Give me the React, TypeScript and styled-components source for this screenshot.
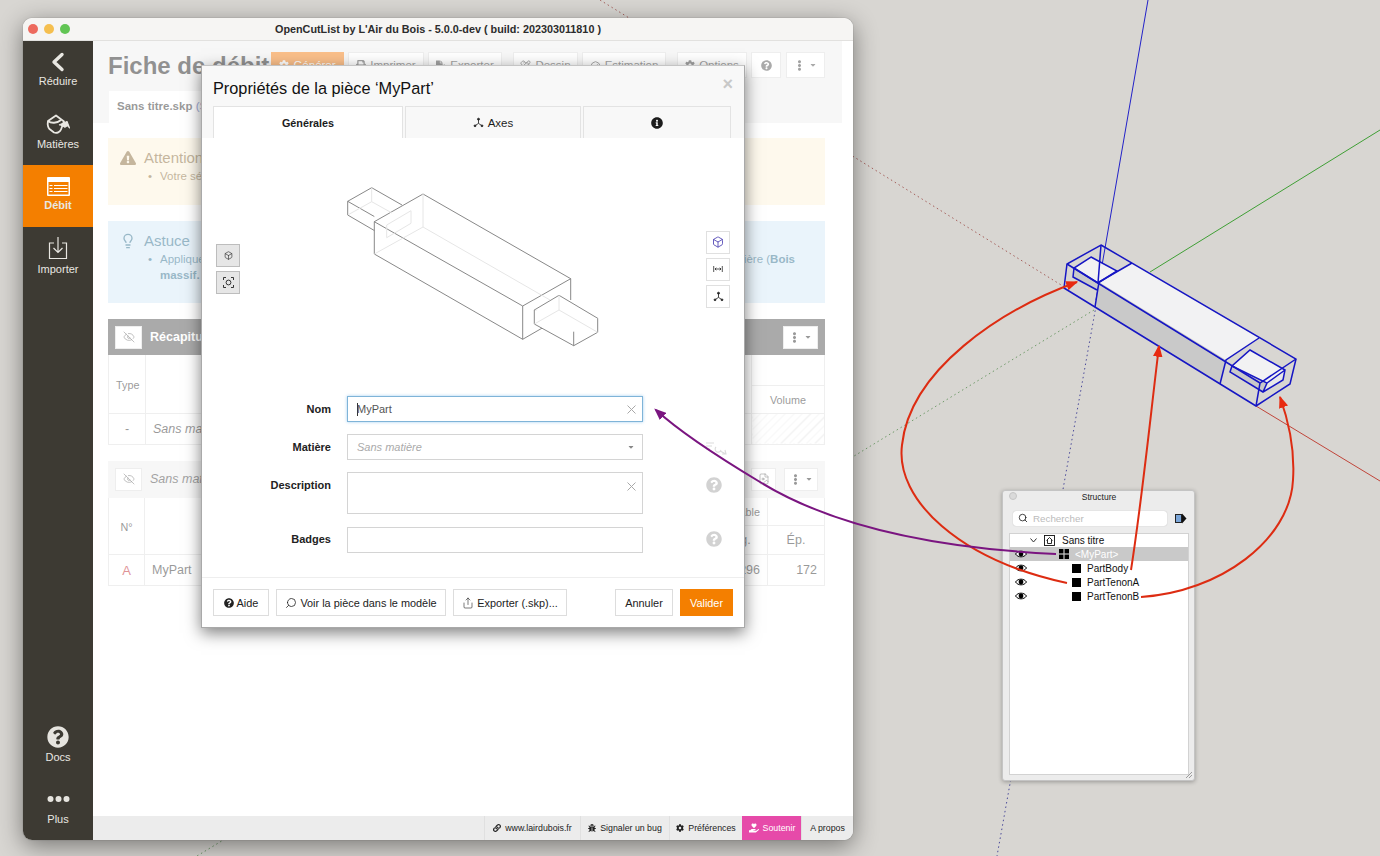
import React from "react";
import styled, { createGlobalStyle } from "styled-components";
import {
  FaQuestionCircle,
  FaInfoCircle,
  FaExclamationTriangle,
  FaCog,
  FaBug,
  FaLink,
  FaHandHoldingHeart,
  FaPrint,
  FaFileExport,
  FaEllipsisV,
  FaCaretDown,
} from "react-icons/fa";
import { Lightbulb, Search, Share, EyeOff, Box, FileImage, Gauge, PencilRuler } from "lucide-react";

const GlobalStyle = createGlobalStyle`
  html, body { margin: 0; padding: 0; background: #d8d6d2; }
  body { font-family: "Liberation Sans", Arial, sans-serif; }
  * { box-sizing: border-box; }
`;

const Desktop = styled.div`
  position: relative;
  width: 1380px;
  height: 856px;
  overflow: hidden;
  background: #d8d6d2;
`;

const SceneLayer = styled.svg`
  position: absolute;
  left: 0;
  top: 0;
  width: 1380px;
  height: 856px;
`;

const ArrowLayer = styled(SceneLayer)`
  pointer-events: none;
`;

const Window = styled.div`
  position: absolute;
  left: 23px;
  top: 18px;
  width: 830px;
  height: 822px;
  display: flex;
  flex-direction: column;
  border-radius: 9px;
  overflow: hidden;
  background: #fff;
  box-shadow: 0 0 1px rgba(0, 0, 0, 0.5), 0 6px 24px rgba(0, 0, 0, 0.45);
`;

const TitleBar = styled.div`
  position: relative;
  flex: 0 0 23px;
  display: flex;
  align-items: center;
  justify-content: center;
  background: #f6f5f3;
  border-bottom: 1px solid #e2e1df;
  font-size: 10.8px;
  font-weight: 700;
  color: #2c2c2c;
`;

const Lights = styled.div`
  position: absolute;
  left: 5px;
  top: 6px;
  display: flex;
  gap: 6px;
`;

const Light = styled.span<{ $c: string }>`
  width: 10px;
  height: 10px;
  border-radius: 50%;
  background: ${(p) => p.$c};
`;

const WindowBody = styled.div`
  flex: 1;
  display: flex;
  min-height: 0;
`;

const Sidebar = styled.nav`
  flex: 0 0 70px;
  display: flex;
  flex-direction: column;
  background: #3d3a33;
`;

const NavItem = styled.div<{ $active?: boolean }>`
  flex: 0 0 62px;
  display: flex;
  flex-direction: column;
  align-items: center;
  justify-content: center;
  gap: 3px;
  padding-bottom: 4px;
  color: #e9e7e2;
  background: ${(p) => (p.$active ? "#f47f00" : "transparent")};
  font-size: 11px;
  font-weight: ${(p) => (p.$active ? 700 : 400)};
  line-height: 13px;
`;

const NavSpacer = styled.div`
  flex: 1;
`;

const Main = styled.div`
  flex: 1;
  display: flex;
  flex-direction: column;
  min-width: 0;
`;

const Page = styled.div`
  position: relative;
  flex: 1;
  overflow: hidden;
  background: #fff;
`;

const PageHeader = styled.header`
  width: 749px;
  height: 82px;
  background: #efefef;
  padding: 11px 0 0 15px;
`;

const HeaderRow = styled.div`
  display: flex;
  align-items: center;
  height: 26px;
`;

const PageTitle = styled.h1`
  margin: 2px 0 0;
  width: 163px;
  font-size: 24px;
  font-weight: 700;
  color: #222;
  white-space: nowrap;
`;

const Toolbar = styled.div`
  display: flex;
  gap: 4px;
`;

const ToolButton = styled.div<{ $w: number; $primary?: boolean; $mr?: number }>`
  width: ${(p) => p.$w}px;
  height: 26px;
  margin-right: ${(p) => p.$mr ?? 0}px;
  display: flex;
  align-items: center;
  justify-content: center;
  gap: 4px;
  font-size: 11.5px;
  color: ${(p) => (p.$primary ? "#fff" : "#444")};
  background: ${(p) => (p.$primary ? "#f47f14" : "#fff")};
  border: 1px solid ${(p) => (p.$primary ? "#f47f14" : "#ddd")};
`;

const FileTabs = styled.div`
  display: flex;
  margin-top: 13px;
`;

const FileTab = styled.div`
  width: 260px;
  height: 32px;
  margin-left: 1px;
  padding: 0 8px 2px;
  display: flex;
  align-items: center;
  background: #fff;
  font-size: 11.5px;
  font-weight: 700;
  color: #333;
  white-space: nowrap;
`;

const FileTabLink = styled.span`
  font-weight: 400;
  color: #3a4fae;
`;

const PageContent = styled.div`
  width: 749px;
  padding: 15px 17px 0 15px;
`;

const Alert = styled.section<{ $kind: "warn" | "info"; $h: number }>`
  height: ${(p) => p.$h}px;
  margin-bottom: 16px;
  padding: 10px 12px;
  background: ${(p) => (p.$kind === "warn" ? "#fcf3db" : "#d4e8f6")};
  color: ${(p) => (p.$kind === "warn" ? "#8a6d3b" : "#31708f")};
`;

const AlertTitle = styled.div`
  display: flex;
  align-items: center;
  gap: 8px;
  font-size: 15px;
  line-height: 20px;
`;

const AlertLine = styled.div<{ $bullet?: boolean }>`
  position: relative;
  display: flex;
  justify-content: space-between;
  padding: 1px 18px 0 40px;
  font-size: 11.5px;
  line-height: 15px;
  &::before {
    content: ${(p) => (p.$bullet ? '"•"' : '""')};
    position: absolute;
    left: 28px;
  }
`;

const Strong = styled.b``;

const Panel = styled.section`
  margin-bottom: 16px;
`;

const PanelHead = styled.div<{ $dark?: boolean }>`
  height: ${(p) => (p.$dark ? 36 : 37)}px;
  display: flex;
  align-items: center;
  gap: 8px;
  padding: 0 7px;
  background: ${(p) => (p.$dark ? "#555" : "#eee")};
  color: ${(p) => (p.$dark ? "#fff" : "#444")};
  font-size: 12.5px;
  font-weight: ${(p) => (p.$dark ? 700 : 400)};
  font-style: ${(p) => (p.$dark ? "normal" : "italic")};
`;

const PanelSpacer = styled.div`
  flex: 1;
`;

const HeadButton = styled.div<{ $w: number }>`
  width: ${(p) => p.$w}px;
  height: 23px;
  display: flex;
  align-items: center;
  justify-content: center;
  gap: 4px;
  background: #fff;
  color: #333;
  border: 1px solid #ddd;
`;

const Grid = styled.table`
  width: 100%;
  table-layout: fixed;
  border-collapse: collapse;
  font-size: 12.5px;
  color: #333;
`;

const Col = styled.col<{ $w?: number }>`
  width: ${(p) => (p.$w ? `${p.$w}px` : "auto")};
`;

const Cell = styled.td<{
  $h?: number;
  $align?: string;
  $italic?: boolean;
  $hatch?: boolean;
  $red?: boolean;
  $open?: boolean;
  $small?: boolean;
}>`
  height: ${(p) => p.$h ?? 28}px;
  padding: ${(p) => (p.$small ? "2px 7px 0" : "0 7px")};
  font-size: ${(p) => (p.$red ? 13 : p.$small ? 10.8 : 12.5)}px;
  border: 1px solid #dedede;
  border-top: ${(p) => (p.$open ? "none" : "1px solid #dedede")};
  text-align: ${(p) => p.$align ?? "center"};
  font-style: ${(p) => (p.$italic ? "italic" : "normal")};
  color: ${(p) => (p.$red ? "#c0262d" : "#333")};
  white-space: nowrap;
  overflow: hidden;
  background: ${(p) =>
    p.$hatch
      ? "repeating-linear-gradient(135deg, #fff, #fff 5px, #e4e4e4 5px, #e4e4e4 6px)"
      : "transparent"};
`;

const Backdrop = styled.div`
  position: absolute;
  inset: 0;
  background: rgba(255, 255, 255, 0.5);
`;

const Modal = styled.div`
  position: absolute;
  left: 108px;
  top: 24px;
  width: 544px;
  height: 563px;
  display: flex;
  flex-direction: column;
  background: #fff;
  border: 1px solid #a9a9a9;
  border-top-color: #c4c4c4;
  box-shadow: 0 5px 15px rgba(0, 0, 0, 0.5);
`;

const ModalHead = styled.div`
  flex: 0 0 72px;
  display: flex;
  flex-direction: column;
  background: #f8f8f8;
`;

const ModalTitleRow = styled.div`
  flex: 0 0 40px;
  display: flex;
  align-items: center;
  justify-content: space-between;
  padding: 4px 11px 0 11px;
`;

const ModalTitle = styled.h2`
  margin: 0;
  font-size: 16.3px;
  font-weight: 400;
  color: #111;
`;

const CloseGlyph = styled.span`
  margin-top: -8px;
  font-size: 18px;
  font-weight: 700;
  color: #c8c8c8;
  line-height: 1;
`;

const ModalTabs = styled.div`
  flex: 1;
  display: grid;
  grid-template-columns: 190px 176px 148px;
  gap: 2px;
  padding: 0 13px 0 11px;
`;

const ModalTab = styled.div<{ $active?: boolean }>`
  display: flex;
  align-items: center;
  justify-content: center;
  gap: 4px;
  font-size: ${(p) => (p.$active ? 10.8 : 11.5)}px;
  font-weight: ${(p) => (p.$active ? 700 : 400)};
  color: #1c1c1c;
  background: ${(p) => (p.$active ? "#fff" : "transparent")};
  border: 1px solid #e3e3e3;
  border-bottom: none;
`;

const ModalBody = styled.div`
  flex: 1;
  display: flex;
  flex-direction: column;
`;

const Preview = styled.div`
  flex: 0 0 258px;
  display: flex;
  align-items: center;
  padding: 4px 14px 0 14px;
`;

const ViewButtons = styled.div`
  display: flex;
  flex-direction: column;
  gap: 4px;
`;

const ViewButton = styled.div<{ $on?: boolean }>`
  width: 24px;
  height: 23px;
  display: flex;
  align-items: center;
  justify-content: center;
  background: ${(p) => (p.$on ? "#e6e6e6" : "#fff")};
  border: 1px solid ${(p) => (p.$on ? "#bdbdbd" : "#e0e0e0")};
  color: #222;
`;

const ModelDrawing = styled.svg`
  flex: 1;
  height: 254px;
`;

const Form = styled.div`
  display: grid;
  grid-template-columns: 118px 296px 1fr;
  column-gap: 16px;
  row-gap: 12px;
  padding-left: 11px;
`;

const Label = styled.label`
  text-align: right;
  font-size: 11px;
  font-weight: 700;
  line-height: 26px;
  color: #222;
`;

const Field = styled.div<{ $focus?: boolean; $tall?: boolean; $gap?: boolean }>`
  position: relative;
  height: ${(p) => (p.$tall ? 42 : 26)}px;
  display: flex;
  align-items: ${(p) => (p.$tall ? "flex-start" : "center")};
  padding: 0 9px;
  font-size: 11px;
  color: #555;
  background: #fff;
  border: 1.5px solid ${(p) => (p.$focus ? "#7fb4d8" : "#d4d4d4")};
  box-shadow: ${(p) => (p.$focus ? "0 0 3px rgba(102,175,233,.6)" : "none")};
  margin-top: ${(p) => (p.$gap ? 1 : 0)}px;
`;

const Caret = styled.span`
  width: 1px;
  height: 13px;
  margin-right: -1px;
  background: #333;
`;

const Placeholder = styled.span`
  font-style: italic;
  color: #aaa;
`;

const ClearMark = styled.svg<{ $top?: number }>`
  position: absolute;
  right: 6px;
  top: ${(p) => p.$top ?? 8}px;
  width: 9px;
  height: 9px;
  stroke: #a8a8a8;
  stroke-width: 1;
`;

const SelectCaret = styled(FaCaretDown)`
  position: absolute;
  right: 7px;
  top: 8px;
  width: 8px;
  height: 8px;
  color: #888;
`;

const SideSlot = styled.div<{ $gap?: boolean }>`
  display: flex;
  align-items: ${(p) => (p.$gap ? "center" : "flex-start")};
  padding: ${(p) => (p.$gap ? 1 : 5)}px 0 0 47px;
  color: #d2d2d2;
`;

const ModalFoot = styled.div`
  flex: 0 0 50px;
  display: flex;
  align-items: center;
  gap: 7px;
  padding: 0 11px;
  border-top: 1px solid #eee;
`;

const FootButton = styled.button<{ $w: number; $primary?: boolean }>`
  width: ${(p) => p.$w}px;
  height: 27px;
  padding: 0;
  display: flex;
  align-items: center;
  justify-content: center;
  gap: 3px;
  font-family: inherit;
  font-size: 10.9px;
  color: ${(p) => (p.$primary ? "#fff" : "#222")};
  background: ${(p) => (p.$primary ? "#f47f00" : "#fff")};
  border: 1px solid ${(p) => (p.$primary ? "#f47f00" : "#ddd")};
`;

const FootSpacer = styled.div`
  flex: 1;
`;

const FlippedSearch = styled(Search)`
  transform: scaleX(-1);
`;

const StatusBar = styled.footer`
  flex: 0 0 24px;
  display: flex;
  justify-content: flex-end;
  background: #ececec;
  font-size: 8.8px;
  color: #222;
`;

const StatusItem = styled.div<{ $w: number; $pink?: boolean }>`
  width: ${(p) => p.$w}px;
  display: flex;
  align-items: center;
  justify-content: center;
  gap: 4px;
  background: ${(p) => (p.$pink ? "#e64aa9" : "transparent")};
  color: ${(p) => (p.$pink ? "#fff" : "#222")};
  border-left: 1px solid ${(p) => (p.$pink ? "#e64aa9" : "#e0e0e0")};
`;

const StructurePanel = styled.aside`
  position: absolute;
  left: 1002px;
  top: 490px;
  width: 193px;
  height: 291px;
  display: flex;
  flex-direction: column;
  padding: 0 5px 5px 6px;
  background: #ececec;
  border: 1px solid #c4c4c4;
  border-radius: 3px;
  box-shadow: 0 1px 4px rgba(0, 0, 0, 0.3);
`;

const StructureTitle = styled.div`
  position: relative;
  flex: 0 0 12px;
  display: flex;
  align-items: center;
  justify-content: center;
  font-size: 8.5px;
  font-weight: 400;
  color: #222;
`;

const CloseDot = styled.span`
  position: absolute;
  left: 0;
  top: 1px;
  width: 8px;
  height: 8px;
  border-radius: 50%;
  background: #dadada;
  border: 1px solid #c6c6c6;
`;

const SearchRow = styled.div`
  flex: 0 0 30px;
  display: flex;
  align-items: center;
  gap: 8px;
  padding: 0 0 0 4px;
`;

const SearchBox = styled.div`
  width: 154px;
  height: 15px;
  display: flex;
  align-items: center;
  gap: 5px;
  padding: 0 5px;
  background: #fff;
  border-radius: 3px;
  font-size: 9.8px;
  color: #bbb;
  box-shadow: 0 0 1px rgba(0, 0, 0, 0.3);
`;

const Tree = styled.div`
  flex: 1;
  background: #fff;
  border: 1px solid #d2d2d2;
  min-height: 0;
`;

const TreeRow = styled.div<{ $selected?: boolean }>`
  height: 14px;
  display: flex;
  align-items: center;
  background: ${(p) => (p.$selected ? "#c9c9c9" : "transparent")};
  color: ${(p) => (p.$selected ? "#fff" : "#111")};
  font-size: 10px;
  &:first-child {
    height: 13px;
  }
`;

const EyeSlot = styled.span`
  flex: 0 0 22px;
  display: flex;
  justify-content: center;
  color: #000;
`;

const TreeIndent = styled.span<{ $w: number }>`
  flex: 0 0 ${(p) => p.$w}px;
  display: flex;
  justify-content: center;
  color: #333;
`;

const TreeSquare = styled.span`
  width: 9px;
  height: 9px;
  margin-right: 6px;
  background: #000;
`;

const ResizeGrip = styled.svg`
  position: absolute;
  right: 2px;
  bottom: 2px;
  width: 7px;
  height: 7px;
`;

const EyeGlyph = () => (
  <svg width="12" height="8" viewBox="0 0 12 8">
    <path d="M0.5 4 C3 0.2 9 0.2 11.5 4 C9 7.8 3 7.8 0.5 4Z" fill="#fff" stroke="#000" strokeWidth="1" />
    <circle cx="6" cy="4" r="2.4" fill="#000" />
  </svg>
);

const AxesGlyph = ({ size = 12 }: { size?: number }) => (
  <svg width={size} height={size} viewBox="0 0 12 12" fill="none" stroke="#222" strokeWidth="0.9">
    <path d="M6 3v4M6 7l-3.4 2.2M6 7l3.4 2.2" />
    <circle cx="6" cy="2.4" r="1.1" fill="#222" />
    <circle cx="2.2" cy="9.6" r="1" fill="#222" />
    <circle cx="9.8" cy="9.6" r="1" fill="#222" />
  </svg>
);

const Model = () => (
  <ModelDrawing viewBox="240 142 466 254" fill="none">
    <g stroke="#7a7a7a" strokeWidth="0.9">
      <path d="M423 194L570.7 278.7L522.7 306L374.3 221.7Z" />
      <path d="M374.3 221.7V254L522.7 339.3V306M522.7 339.3L544 327M570.7 278.7V300" />
      <path d="M402 205L371.7 187.7L347.7 201.3L374.3 216.5M347.7 201.3V215L374.3 230.5" />
      <path d="M559 295.3L597.7 318.3L573.7 331.7L534.3 310Z" fill="#fff" />
      <path d="M534.3 310V324L573.7 345.7L597.7 332.3V318.3M573.7 331.7V345.7" fill="#fff" />
    </g>
    <g stroke="#e6e6e6" strokeWidth="1">
      <path d="M423 194V227L374.3 254M423 227L550 300" />
      <path d="M371.7 187.7V201.7L347.7 215M371.7 201.7L392 213" />
      <path d="M386.7 225L411 210.7V223.3L386.7 237.7Z" />
      <path d="M559 295.3V310L534.3 324M559 310L597.7 332.3" />
    </g>
  </ModelDrawing>
);

const Scene = () => (
  <SceneLayer viewBox="0 0 1380 856" fill="none">
    <path d="M1148 0L1096 300" stroke="#2222c8" strokeWidth="1" />
    <path d="M1096 306L997 856" stroke="#4a4a9a" strokeWidth="1" strokeDasharray="1.5 3" />
    <path d="M1150 272L1380 130" stroke="#3f9f35" strokeWidth="1" />
    <path d="M1094 310L197 856" stroke="#6f9a69" strokeWidth="1" strokeDasharray="1.5 3" />
    <path d="M600 0L1066 288" stroke="#a5605c" strokeWidth="1" strokeDasharray="1.5 3" />
    <path d="M1256 406L1380 481" stroke="#c0453a" strokeWidth="1" />
    <path d="M1099 282L1226 360L1220 384L1095 307Z" fill="#c9c9c9" />
    <path d="M1132 263L1259 338L1226 360L1099 282Z" fill="#f2f2f3" />
    <path d="M1091 257L1117 271L1098 283L1074 268Z" fill="#f2f2f3" />
    <path d="M1074 268L1098 283L1097 290L1073 277Z" fill="#c9c9c9" />
    <path d="M1250 350L1285 370L1267 383L1232 366Z" fill="#f2f2f3" />
    <path d="M1232 366L1267 383L1263 392L1230 372Z" fill="#c9c9c9" />
    <path d="M1267 383L1285 370L1283 380L1263 392Z" fill="#e8e8e8" />
    <g stroke="#1616c4" strokeWidth="1.5">
      <path d="M1101 245L1296 359L1290 384L1256 406L1064 288L1067 264Z" />
      <path d="M1067 264L1260 383L1296 359M1260 383L1256 406M1101 245L1098 283" />
      <path d="M1132 263L1099 282L1095 307M1259 338L1226 360L1220 384" />
      <path d="M1091 257L1117 271L1098 283L1074 268ZM1074 268L1073 277L1097 290" />
      <path d="M1250 350L1285 370L1283 380L1263 392L1230 372L1232 366ZM1232 366L1267 383L1263 392M1267 383L1285 370" />
    </g>
  </SceneLayer>
);

const Arrows = () => (
  <ArrowLayer viewBox="0 0 1380 856" fill="none">
    <defs>
      <marker id="redTip" markerWidth="12" markerHeight="10" refX="9" refY="4" orient="auto" markerUnits="userSpaceOnUse" viewBox="0 0 10 8">
        <path d="M0 0L10 4L0 8Z" fill="#e82a10" />
      </marker>
      <marker id="purpleTip" markerWidth="12" markerHeight="10" refX="8" refY="4" orient="auto" markerUnits="userSpaceOnUse" viewBox="0 0 10 8">
        <path d="M0 0L10 4L0 8Z" fill="#7a1580" />
      </marker>
    </defs>
    <path d="M1067 583C960 560 895 500 902 445C910 370 1000 310 1077 282" stroke="#dd2c12" strokeWidth="2" markerEnd="url(#redTip)" />
    <path d="M1131 570C1142 500 1150 420 1159 346" stroke="#dd2c12" strokeWidth="2" markerEnd="url(#redTip)" />
    <path d="M1141 597C1220 592 1290 540 1293 480C1295 450 1290 425 1280 397" stroke="#dd2c12" strokeWidth="2" markerEnd="url(#redTip)" />
    <path d="M1056 554C930 548 830 525 760 482C715 455 680 432 656 410" stroke="#7a1580" strokeWidth="2" markerEnd="url(#purpleTip)" />
  </ArrowLayer>
);

export default function App() {
  return (
    <Desktop>
      <GlobalStyle />
      <Scene />
      <Window>
        <TitleBar>
          <Lights>
            <Light $c="#ed6a5e" />
            <Light $c="#f5bf4f" />
            <Light $c="#62c554" />
          </Lights>
          OpenCutList by L'Air du Bois - 5.0.0-dev ( build: 202303011810 )
        </TitleBar>
        <WindowBody>
          <Sidebar>
            <NavItem>
              <svg width="14" height="20" viewBox="0 0 14 20" fill="none" stroke="#e9e7e2" strokeWidth="3.4" strokeLinecap="round" strokeLinejoin="round">
                <path d="M11 2.5L3 10l8 7.5" />
              </svg>
              Réduire
            </NavItem>
            <NavItem>
              <svg width="25" height="21" viewBox="0 0 25 21" fill="none" stroke="#e9e7e2" strokeWidth="1.8" strokeLinejoin="round">
                <path d="M2 7L10 1.5L18 7.5L15 15.5C14 18 11 19.5 8 18.5L3.5 15C1.5 13 1.5 10 2 7Z" />
                <path d="M2 7C5 9.5 11 9.5 15 6" />
                <path d="M13 11L21 7.5L23.5 14L21.5 11.5L18.5 13.5" fill="#e9e7e2" strokeWidth="1.2" />
              </svg>
              Matières
            </NavItem>
            <NavItem $active>
              <svg width="23" height="19" viewBox="0 0 23 19">
                <rect width="23" height="19" rx="1" fill="#fff" />
                <rect x="1.5" y="5" width="20" height="12.5" fill="#f47f00" />
                <path d="M2.5 8.5h3M2.5 11.5h3M2.5 14.5h3M7 8.5h13.5M7 11.5h13.5M7 14.5h13.5" stroke="#fff" strokeWidth="1.2" />
              </svg>
              Débit
            </NavItem>
            <NavItem>
              <svg width="20" height="24" viewBox="0 0 20 24" fill="none" stroke="#e9e7e2" strokeWidth="1.2">
                <path d="M6 7H1.5v15.5h17V7H14" />
                <path d="M10 1v15M5.5 12l4.5 4.5 4.5-4.5" />
              </svg>
              Importer
            </NavItem>
            <NavSpacer />
            <NavItem>
              <FaQuestionCircle size={22} color="#e6e4df" />
              Docs
            </NavItem>
            <NavItem>
              <svg width="23" height="22" viewBox="0 0 23 22" fill="#e6e4df">
                <circle cx="3.5" cy="11" r="3" />
                <circle cx="11.5" cy="11" r="3" />
                <circle cx="19.5" cy="11" r="3" />
              </svg>
              Plus
            </NavItem>
          </Sidebar>
          <Main>
            <Page>
              <PageHeader>
                <HeaderRow>
                  <PageTitle>Fiche de débit</PageTitle>
                  <Toolbar>
                    <ToolButton $w={73} $primary>
                      <FaCog size={10} /> Générer
                    </ToolButton>
                    <ToolButton $w={76}>
                      <FaPrint size={10} /> Imprimer
                    </ToolButton>
                    <ToolButton $w={74} $mr={7}>
                      <FaFileExport size={10} /> Exporter
                    </ToolButton>
                    <ToolButton $w={65}>
                      <PencilRuler size={11} /> Dessin
                    </ToolButton>
                    <ToolButton $w={84} $mr={7}>
                      <Gauge size={11} /> Estimation
                    </ToolButton>
                    <ToolButton $w={70}>
                      <FaCog size={10} /> Options
                    </ToolButton>
                    <ToolButton $w={30} $mr={1}>
                      <FaQuestionCircle size={11} color="#555" />
                    </ToolButton>
                    <ToolButton $w={39}>
                      <FaEllipsisV size={11} color="#444" />
                      <FaCaretDown size={8} color="#555" />
                    </ToolButton>
                  </Toolbar>
                </HeaderRow>
                <FileTabs>
                  <FileTab>
                    Sans titre.skp&nbsp;<FileTabLink>(Sans titre)</FileTabLink>
                  </FileTab>
                </FileTabs>
              </PageHeader>
              <PageContent>
                <Alert $kind="warn" $h={67}>
                  <AlertTitle>
                    <FaExclamationTriangle size={16} /> Attention
                  </AlertTitle>
                  <AlertLine $bullet>Votre sélection ne contient aucune pièce.</AlertLine>
                </Alert>
                <Alert $kind="info" $h={82}>
                  <AlertTitle>
                    <Lightbulb size={16} /> Astuce
                  </AlertTitle>
                  <AlertLine $bullet>
                    <span>Appliquez une matière à vos pièces</span>
                    <span>
                      matière (<Strong>Bois</Strong>
                    </span>
                  </AlertLine>
                  <AlertLine>
                    <Strong>massif.</Strong>
                  </AlertLine>
                </Alert>
                <Panel>
                  <PanelHead $dark>
                    <HeadButton $w={27}>
                      <EyeOff size={12} strokeWidth={1.2} />
                    </HeadButton>
                    Récapitulatif
                    <PanelSpacer />
                    <HeadButton $w={35}>
                      <FaEllipsisV size={11} />
                      <FaCaretDown size={8} />
                    </HeadButton>
                  </PanelHead>
                  <Grid>
                    <colgroup>
                      <Col $w={37} />
                      <Col />
                      <Col $w={73} />
                    </colgroup>
                    <tbody>
                      <tr>
                        <Cell rowSpan={2} $h={30} $open $small>
                          Type
                        </Cell>
                        <Cell rowSpan={2} $h={30} $open />
                        <Cell $h={30} $open />
                      </tr>
                      <tr>
                        <Cell $h={28} $small>
                          Volume
                        </Cell>
                      </tr>
                      <tr>
                        <Cell $h={31}>-</Cell>
                        <Cell $h={31} $align="left" $italic>
                          Sans matière
                        </Cell>
                        <Cell $h={31} $hatch />
                      </tr>
                    </tbody>
                  </Grid>
                </Panel>
                <Panel>
                  <PanelHead>
                    <HeadButton $w={27}>
                      <EyeOff size={12} strokeWidth={1.2} />
                    </HeadButton>
                    Sans matière
                    <PanelSpacer />
                    <HeadButton $w={25}>
                      <FileImage size={12} strokeWidth={1.2} />
                    </HeadButton>
                    <HeadButton $w={34}>
                      <FaEllipsisV size={11} />
                      <FaCaretDown size={8} />
                    </HeadButton>
                  </PanelHead>
                  <Grid>
                    <colgroup>
                      <Col $w={36} />
                      <Col />
                      <Col $w={65} />
                      <Col $w={57} />
                    </colgroup>
                    <tbody>
                      <tr>
                        <Cell rowSpan={2} $h={28} $open $small>
                          N°
                        </Cell>
                        <Cell rowSpan={2} $h={28} $open />
                        <Cell $h={28} $align="right" $open $small>
                          Débitable
                        </Cell>
                        <Cell $h={28} $open />
                      </tr>
                      <tr>
                        <Cell $h={29}>Long.</Cell>
                        <Cell $h={29}>Ép.</Cell>
                      </tr>
                      <tr>
                        <Cell $h={31} $red>
                          A
                        </Cell>
                        <Cell $h={31} $align="left">
                          MyPart
                        </Cell>
                        <Cell $h={31} $align="right">
                          296
                        </Cell>
                        <Cell $h={31} $align="right">
                          172
                        </Cell>
                      </tr>
                    </tbody>
                  </Grid>
                </Panel>
              </PageContent>
              <Backdrop />
              <Modal>
                <ModalHead>
                  <ModalTitleRow>
                    <ModalTitle>Propriétés de la pièce ‘MyPart’</ModalTitle>
                    <CloseGlyph>×</CloseGlyph>
                  </ModalTitleRow>
                  <ModalTabs>
                    <ModalTab $active>Générales</ModalTab>
                    <ModalTab>
                      <AxesGlyph size={11} /> Axes
                    </ModalTab>
                    <ModalTab>
                      <FaInfoCircle size={12} />
                    </ModalTab>
                  </ModalTabs>
                </ModalHead>
                <ModalBody>
                  <Preview>
                    <ViewButtons>
                      <ViewButton $on>
                        <Box size={9} strokeWidth={1.6} />
                      </ViewButton>
                      <ViewButton $on>
                        <svg width="11" height="11" viewBox="0 0 11 11" fill="none" stroke="#222" strokeWidth="0.9">
                          <path d="M0.5 3V0.5H3M8 0.5h2.5V3M0.5 8v2.5H3M8 10.5h2.5V8" />
                          <circle cx="5.5" cy="5.5" r="2.4" />
                        </svg>
                      </ViewButton>
                    </ViewButtons>
                    <Model />
                    <ViewButtons>
                      <ViewButton>
                        <Box size={12} color="#3528a8" strokeWidth={1.5} />
                      </ViewButton>
                      <ViewButton>
                        <svg width="10" height="6" viewBox="0 0 11 7" fill="none" stroke="#222" strokeWidth="0.9">
                          <path d="M0.5 0v7M10.5 0v7M2 3.5h7M3.5 2L2 3.5 3.5 5M7.5 2L9 3.5 7.5 5" />
                        </svg>
                      </ViewButton>
                      <ViewButton>
                        <AxesGlyph size={11} />
                      </ViewButton>
                    </ViewButtons>
                  </Preview>
                  <Form>
                    <Label>Nom</Label>
                    <Field $focus>
                      <Caret />
                      MyPart
                      <ClearMark viewBox="0 0 9 9">
                        <path d="M0.5 0.5L8.5 8.5M8.5 0.5L0.5 8.5" />
                      </ClearMark>
                    </Field>
                    <div />
                    <Label>Matière</Label>
                    <Field>
                      <Placeholder>Sans matière</Placeholder>
                      <SelectCaret />
                    </Field>
                    <SideSlot $gap>
                      <svg width="22" height="14" viewBox="0 0 22 14" fill="none" stroke="#dcdcdc" strokeWidth="1.1">
                        <path d="M0 2h8M0 5h6M0 8h4" />
                        <path d="M10 6a3 3 0 1 0 5 3M14 10l6 3M19 9l1 4-4 0" />
                      </svg>
                    </SideSlot>
                    <Label>Description</Label>
                    <Field $tall>
                      <ClearMark viewBox="0 0 9 9" $top={9}>
                        <path d="M0.5 0.5L8.5 8.5M8.5 0.5L0.5 8.5" />
                      </ClearMark>
                    </Field>
                    <SideSlot>
                      <FaQuestionCircle size={16} />
                    </SideSlot>
                    <Label>Badges</Label>
                    <Field $gap />
                    <SideSlot>
                      <FaQuestionCircle size={16} />
                    </SideSlot>
                  </Form>
                </ModalBody>
                <ModalFoot>
                  <FootButton $w={56}>
                    <FaQuestionCircle size={10} /> Aide
                  </FootButton>
                  <FootButton $w={170}>
                    <FlippedSearch size={12} strokeWidth={1.6} /> Voir la pièce dans le modèle
                  </FootButton>
                  <FootButton $w={114}>
                    <Share size={12} strokeWidth={1.2} /> Exporter (.skp)...
                  </FootButton>
                  <FootSpacer />
                  <FootButton $w={58}>Annuler</FootButton>
                  <FootButton $w={53} $primary>
                    Valider
                  </FootButton>
                </ModalFoot>
              </Modal>
            </Page>
            <StatusBar>
              <StatusItem $w={96}>
                <FaLink size={8} /> www.lairdubois.fr
              </StatusItem>
              <StatusItem $w={89}>
                <FaBug size={8} /> Signaler un bug
              </StatusItem>
              <StatusItem $w={73}>
                <FaCog size={8} /> Préférences
              </StatusItem>
              <StatusItem $w={59} $pink>
                <FaHandHoldingHeart size={10} /> Soutenir
              </StatusItem>
              <StatusItem $w={52}>A propos</StatusItem>
            </StatusBar>
          </Main>
        </WindowBody>
      </Window>
      <StructurePanel>
        <StructureTitle>
          <CloseDot />
          Structure
        </StructureTitle>
        <SearchRow>
          <SearchBox>
            <Search size={10} color="#222" /> Rechercher
          </SearchBox>
          <svg width="12" height="11" viewBox="0 0 12 11">
            <rect x="0.5" y="1.5" width="6" height="8" fill="#7aa5d8" stroke="#222" />
            <path d="M7 0.5L11.5 5.5L7 10.5Z" fill="#111" />
          </svg>
        </SearchRow>
        <Tree>
          <TreeRow>
            <TreeIndent $w={19} />
            <TreeIndent $w={8}>
              <svg width="7" height="5" viewBox="0 0 7 5" fill="none" stroke="#333">
                <path d="M0.5 0.5L3.5 4L6.5 0.5" />
              </svg>
            </TreeIndent>
            <TreeIndent $w={25}>
              <svg width="11" height="11" viewBox="0 0 11 11" fill="none" stroke="#111" strokeWidth="0.9">
                <rect x="0.5" y="0.5" width="10" height="10" />
                <path d="M2.5 5.5L5.5 2.5L8.5 5.5M3.5 5V8.5H7.5V5" />
              </svg>
            </TreeIndent>
            Sans titre
          </TreeRow>
          <TreeRow $selected>
            <EyeSlot>
              <EyeGlyph />
            </EyeSlot>
            <TreeIndent $w={23} />
            <TreeIndent $w={17}>
              <svg width="10" height="10" viewBox="0 0 10 10" fill="#000">
                <rect width="4.4" height="4.4" />
                <rect x="5.6" width="4.4" height="4.4" />
                <rect y="5.6" width="4.4" height="4.4" />
                <rect x="5.6" y="5.6" width="4.4" height="4.4" />
              </svg>
            </TreeIndent>
            <TreeIndent $w={3} />
            &lt;MyPart&gt;
          </TreeRow>
          <TreeRow>
            <EyeSlot>
              <EyeGlyph />
            </EyeSlot>
            <TreeIndent $w={40} />
            <TreeSquare />
            PartBody
          </TreeRow>
          <TreeRow>
            <EyeSlot>
              <EyeGlyph />
            </EyeSlot>
            <TreeIndent $w={40} />
            <TreeSquare />
            PartTenonA
          </TreeRow>
          <TreeRow>
            <EyeSlot>
              <EyeGlyph />
            </EyeSlot>
            <TreeIndent $w={40} />
            <TreeSquare />
            PartTenonB
          </TreeRow>
        </Tree>
        <ResizeGrip viewBox="0 0 7 7" fill="none" stroke="#888" strokeWidth="0.8">
          <path d="M7 1L1 7M7 4L4 7" />
        </ResizeGrip>
      </StructurePanel>
      <Arrows />
    </Desktop>
  );
}
